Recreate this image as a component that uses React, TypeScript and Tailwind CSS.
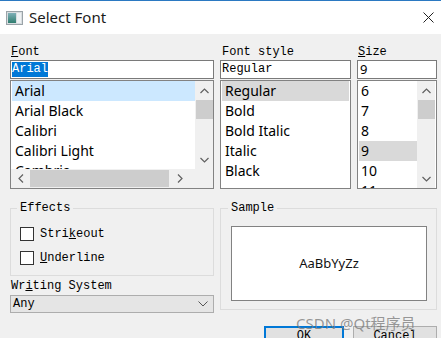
import React from "react";

const mono = { fontFamily: '"Liberation Mono", "DejaVu Sans Mono", monospace' };
const sans = { fontFamily: '"Noto Sans", "Open Sans", sans-serif' };

function Up() {
  return (
    <svg width="9" height="6" viewBox="0 0 9 6"><path d="M0.5 5 L4.5 1 L8.5 5" fill="none" stroke="#606060" strokeWidth="1.2" /></svg>
  );
}
function Down() {
  return (
    <svg width="9" height="6" viewBox="0 0 9 6"><path d="M0.5 1 L4.5 5 L8.5 1" fill="none" stroke="#606060" strokeWidth="1.2" /></svg>
  );
}
function Left() {
  return (
    <svg width="6" height="9" viewBox="0 0 6 9"><path d="M5 0.5 L1 4.5 L5 8.5" fill="none" stroke="#606060" strokeWidth="1.2" /></svg>
  );
}
function Right() {
  return (
    <svg width="6" height="9" viewBox="0 0 6 9"><path d="M1 0.5 L5 4.5 L1 8.5" fill="none" stroke="#606060" strokeWidth="1.2" /></svg>
  );
}

function VScroll({ h }: { h: number }) {
  return (
    <div className="w-[18px] bg-[#f0f0f0] flex flex-col items-center" style={{ height: h }}>
      <div className="h-[19px] flex items-center justify-center"><Up /></div>
      <div className="w-[17px] h-[19px] bg-[#cdcdcd]" />
      <div className="flex-1" />
      <div className="h-[19px] flex items-center justify-center"><Down /></div>
    </div>
  );
}

export default function App() {
  return (
    <div className="w-[441px] h-[338px] bg-[#f0f0f0] overflow-hidden relative text-[#000]">
      {/* title bar */}
      <div className="h-[34px] bg-white border-t border-[#2b79c2] flex items-center relative">
        <svg className="ml-[6px]" width="17" height="14" viewBox="0 0 17 14">
          <rect x="0.5" y="0.5" width="16" height="13" fill="#d8dde0" stroke="#9aa3a8" />
          <defs>
            <linearGradient id="g" x1="0" y1="0" x2="0" y2="1">
              <stop offset="0" stopColor="#7fb0b8" />
              <stop offset="1" stopColor="#2f7d6f" />
            </linearGradient>
          </defs>
          <rect x="2" y="2" width="8" height="10" fill="url(#g)" />
          <rect x="11" y="2" width="4" height="10" fill="#eef2f4" />
        </svg>
        <span className="ml-[6px] text-[15px] leading-none text-[#1a1a1a]" style={sans}>Select Font</span>
        <svg className="absolute left-[423px] top-[11px]" width="11" height="11" viewBox="0 0 11 11">
          <path d="M0.5 0.5 L10.5 10.5 M10.5 0.5 L0.5 10.5" stroke="#222" strokeWidth="1" />
        </svg>
      </div>

      {/* top row */}
      <div className="flex pl-[10px] pt-[12px] gap-[6px]">
        {/* Font */}
        <div className="w-[204px] flex flex-col">
          <div className="h-[13px] text-[12px] leading-[13px] pl-[1px]" style={mono}><span className="underline">F</span>ont</div>
          <div className="h-[19px] mt-[1px] bg-white border border-[#7a7a7a] flex items-center pl-[1px]">
            <span className="bg-[#0078d7] text-white text-[12px] leading-[15px] px-[0px]" style={mono}>Arial</span>
          </div>
          <div className="h-[109px] mt-[1px] bg-white border border-[#828282] flex flex-col">
            <div className="flex h-[88px]">
              <div className="flex-1 flex flex-col overflow-hidden text-[14px] pl-[1px]" style={sans}>
                <div className="h-[20px] shrink-0 bg-[#cce8ff] pl-[3px] leading-[20px]">Arial</div>
                <div className="h-[20px] shrink-0 pl-[3px] leading-[20px]">Arial Black</div>
                <div className="h-[20px] shrink-0 pl-[3px] leading-[20px]">Calibri</div>
                <div className="h-[20px] shrink-0 pl-[3px] leading-[20px]">Calibri Light</div>
                <div className="h-[20px] shrink-0 pl-[3px] leading-[20px]">Cambria</div>
              </div>
              <VScroll h={88} />
            </div>
            <div className="flex h-[19px] bg-[#f0f0f0]">
              <div className="w-[19px] flex items-center justify-center"><Left /></div>
              <div className="w-[139px] h-[17px] mt-[1px] bg-[#cdcdcd]" />
              <div className="flex-1 flex items-center justify-center pr-[4px]"><Right /></div>
              <div className="w-[18px] bg-[#f0f0f0]" />
            </div>
          </div>
        </div>

        {/* Font style */}
        <div className="w-[131px] flex flex-col">
          <div className="h-[13px] text-[12px] leading-[13px] pl-[2px]" style={mono}>Font style</div>
          <div className="h-[19px] mt-[1px] bg-white border border-[#7a7a7a] flex items-center pl-[1px]">
            <span className="text-[12px] leading-[15px]" style={mono}>Regular</span>
          </div>
          <div className="h-[109px] mt-[1px] bg-white border border-[#828282] flex flex-col text-[14px] px-[1px]" style={sans}>
            <div className="h-[20px] bg-[#d9d9d9] pl-[3px] leading-[20px]">Regular</div>
            <div className="h-[20px] pl-[3px] leading-[20px]">Bold</div>
            <div className="h-[20px] pl-[3px] leading-[20px]">Bold Italic</div>
            <div className="h-[20px] pl-[3px] leading-[20px]">Italic</div>
            <div className="h-[20px] pl-[3px] leading-[20px]">Black</div>
          </div>
        </div>

        {/* Size */}
        <div className="w-[80px] flex flex-col">
          <div className="h-[13px] text-[12px] leading-[13px] pl-[1px]" style={mono}><span className="underline">S</span>ize</div>
          <div className="h-[19px] mt-[1px] bg-white border border-[#7a7a7a] flex items-center pl-[2px]">
            <span className="text-[13px] leading-[15px]" style={sans}>9</span>
          </div>
          <div className="h-[109px] mt-[1px] bg-white border border-[#828282] flex">
            <div className="flex-1 flex flex-col overflow-hidden text-[14px] pl-[1px]" style={sans}>
              <div className="h-[20px] shrink-0 pl-[2px] leading-[20px]">6</div>
              <div className="h-[20px] shrink-0 pl-[2px] leading-[20px]">7</div>
              <div className="h-[20px] shrink-0 pl-[2px] leading-[20px]">8</div>
              <div className="h-[20px] shrink-0 bg-[#d9d9d9] pl-[2px] leading-[20px]">9</div>
              <div className="h-[20px] shrink-0 pl-[2px] leading-[20px]">10</div>
              <div className="h-[20px] shrink-0 pl-[2px] leading-[20px]">11</div>
            </div>
            <div className="pr-[1px]"><VScroll h={107} /></div>
          </div>
        </div>
      </div>

      {/* bottom area */}
      <div className="flex pl-[10px] pt-[19px] gap-[6px]">
        <div className="w-[204px] flex flex-col">
          <div className="relative h-[68px] border border-[#dcdcdc] flex flex-col pl-[9px] pt-[18px] gap-[10px]">
            <span className="absolute left-[6px] top-[-7px] bg-[#f0f0f0] px-[3px] text-[12px] leading-[13px]" style={mono}>Effects</span>
            <div className="flex items-center gap-[6px]">
              <div className="w-[14px] h-[14px] bg-white border border-[#333]" />
              <span className="text-[12px] leading-[13px]" style={mono}>Stri<span className="underline">k</span>eout</span>
            </div>
            <div className="flex items-center gap-[6px]">
              <div className="w-[14px] h-[14px] bg-white border border-[#333]" />
              <span className="text-[12px] leading-[13px]" style={mono}><span className="underline">U</span>nderline</span>
            </div>
          </div>
          <div className="h-[13px] mt-[4px] text-[12px] leading-[13px] pl-[1px]" style={mono}>Wr<span className="underline">i</span>ting System</div>
          <div className="h-[18px] mt-[2px] bg-[#e5e5e5] border border-[#adadad] flex items-center justify-between pl-[2px] pr-[5px]">
            <span className="text-[12px] leading-[13px]" style={mono}>Any</span>
            <svg width="10" height="6" viewBox="0 0 10 6"><path d="M0.5 0.5 L5 5 L9.5 0.5" fill="none" stroke="#555" strokeWidth="1" /></svg>
          </div>
        </div>

        <div className="relative w-[217px] h-[102px] border border-[#dcdcdc] pl-[10px] pt-[17px]">
          <span className="absolute left-[7px] top-[-7px] bg-[#f0f0f0] px-[3px] text-[12px] leading-[13px]" style={mono}>Sample</span>
          <div className="w-[196px] h-[75px] bg-white border border-[#828282] flex items-center justify-center">
            <span className="text-[13px] text-[#111]" style={sans}>AaBbYyZz</span>
          </div>
        </div>
      </div>

      {/* buttons */}
      <div className="flex pl-[264px] pt-[13px] gap-[9px]">
        <div className="w-[80px] h-[24px] bg-[#e1e1e1] border-2 border-[#0078d7] flex justify-center pt-[2px]">
          <span className="text-[12px] leading-[13px]" style={mono}>OK</span>
        </div>
        <div className="w-[84px] h-[24px] bg-[#e1e1e1] border border-[#adadad] flex justify-center pt-[3px]">
          <span className="text-[12px] leading-[13px]" style={mono}>Cancel</span>
        </div>
      </div>

      {/* watermark */}
      <div className="absolute left-[296px] top-[314px] text-[15px] leading-[18px] text-[rgba(120,120,120,0.75)]" style={{ fontFamily: '"Noto Sans", "Noto Sans CJK SC", sans-serif' }}>
        CSDN @Qt程序员
      </div>
    </div>
  );
}
